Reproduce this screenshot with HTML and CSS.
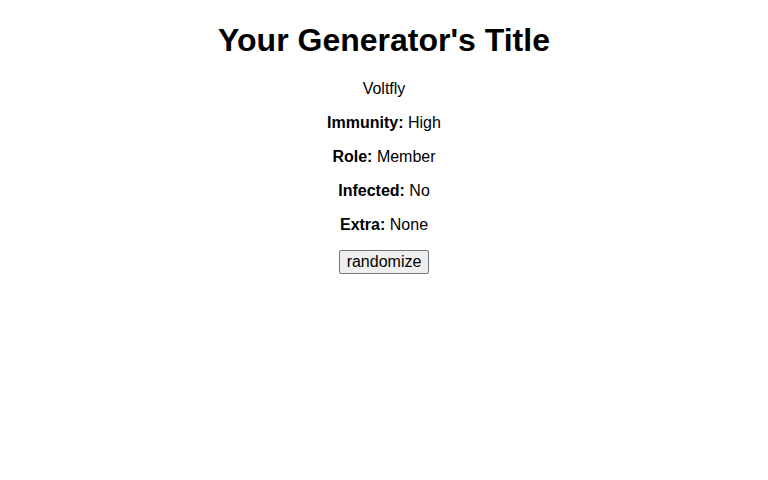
FILE: index.html
```html
<!DOCTYPE html>
<html lang="en">
<head>
    <meta charset="UTF-8">
    <title>Generator</title>
    <link rel="stylesheet" href="styles.css">
</head>
<body>
    <div class="generator">
        <h1 class="title">Your Generator's Title</h1>
        <p id="name">Voltfly</p>
        <p><b>Immunity:</b> <span id="immunity">High</span></p>
        <p><b>Role:</b> <span id="role">Member</span></p>
        <p><b>Infected:</b> <span id="infected">No</span></p>
        <p><b>Extra:</b> <span id="extra">None</span></p>
        <button class="randomize" id="randomize">randomize</button>
    </div>
</body>
</html>
```
FILE: styles.css
```css
body {
    margin: 0;
    font-family: "Liberation Sans", Arial, sans-serif;
    color: #000;
    background: #fff;
}

.generator {
    text-align: center;
}

.title {
    font-size: 32px;
    margin: 22px 0 21px;
}

p {
    font-size: 16px;
    margin: 16px 0;
}

.randomize {
    font-family: "Liberation Sans", Arial, sans-serif;
    font-size: 16px;
    line-height: 18px;
    padding: 2px 7px;
    background: #efefef;
    border: 1px solid #767676;
    border-radius: 2px;
    color: #000;
}
```
